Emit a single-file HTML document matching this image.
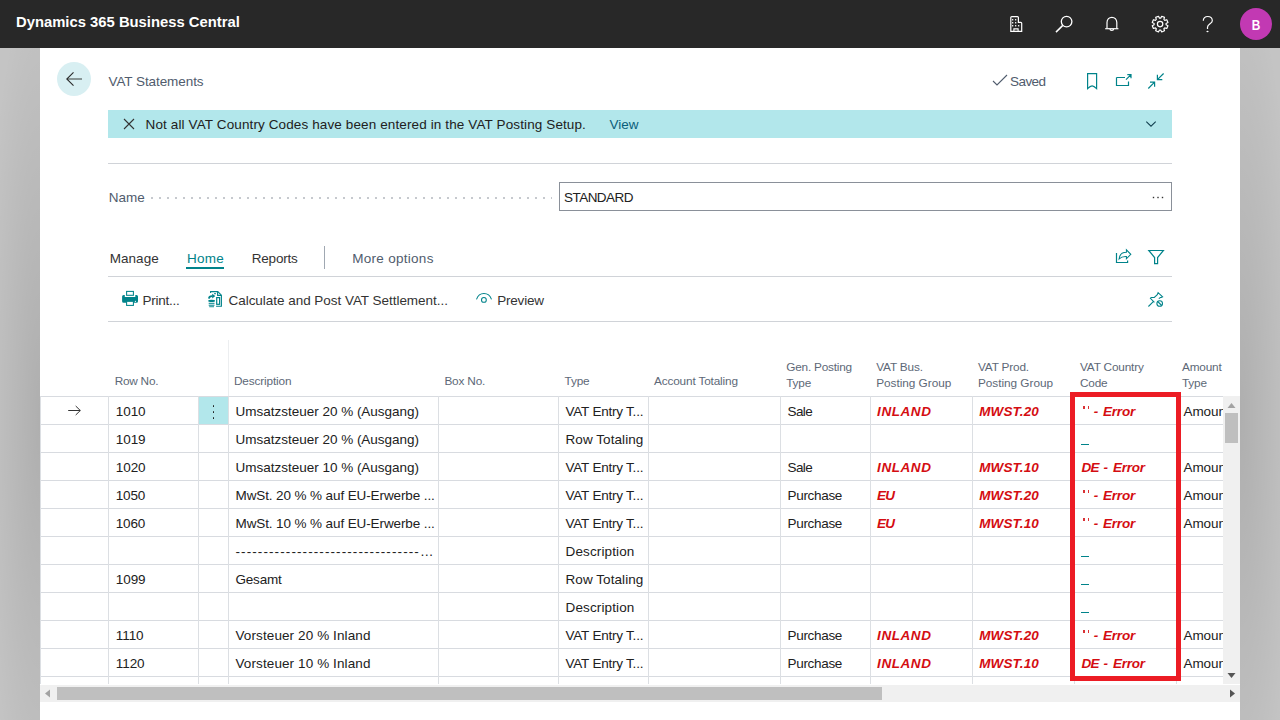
<!DOCTYPE html>
<html><head><meta charset="utf-8">
<style>
*{box-sizing:border-box;margin:0;padding:0}
html,body{width:1280px;height:720px;overflow:hidden;background:#fff;font-family:"Liberation Sans",sans-serif}
.a{position:absolute;white-space:pre}
.hl{position:absolute;height:1px;background:#d8dbe0}
.vl{position:absolute;width:1px;background:#dcdfe3}
svg{position:absolute;overflow:visible;left:0;top:0}
</style></head><body>

<div class="a" style="left:0;top:0;width:1280px;height:48px;background:#282828"></div>
<div class="a" style="left:16px;top:9.4px;font-size:15.4px;line-height:26px;font-weight:bold;color:#fff;transform-origin:0 0;transform:scaleX(0.962)">Dynamics 365 Business Central</div>
<div class="a" style="left:0;top:48px;width:40px;height:672px;background:radial-gradient(ellipse 56px 450px at 40px 370px,rgba(0,0,0,0.11),rgba(0,0,0,0) 100%),#c4c4c4"></div>
<div class="a" style="left:1240px;top:48px;width:40px;height:672px;background:radial-gradient(ellipse 56px 450px at 0px 370px,rgba(0,0,0,0.11),rgba(0,0,0,0) 100%),#c4c4c4"></div>
<svg width="1280" height="720" fill="none" stroke="#fff" stroke-width="1.2"><path d="M1010.8 17.6Q1010.8 16.7 1011.7 16.7H1017.5Q1018.4 16.7 1018.4 17.6V22.3H1020.8Q1021.7 22.3 1021.7 23.2V31.4H1010.8Z"/><path d="M1013.9 31.2V28.9H1018.1V31.2" stroke-width="1.1"/></svg>
<svg width="1280" height="720" fill="#fff"><rect x="1012" y="19.1" width="1.3" height="1.3"/><rect x="1015" y="19.1" width="1.3" height="1.3"/><rect x="1012" y="22.1" width="1.3" height="1.3"/><rect x="1015" y="22.1" width="1.3" height="1.3"/><rect x="1012" y="25.1" width="1.3" height="1.3"/><rect x="1015" y="25.1" width="1.3" height="1.3"/><rect x="1018" y="25.1" width="1.3" height="1.3"/><rect x="1015.6" y="29.6" width="0.8" height="1.3" fill="#888"/></svg>
<svg width="1280" height="720" fill="none" stroke="#fff" stroke-width="1.3"><circle cx="1066.6" cy="21.6" r="5.3"/><path d="M1062.8 25.4L1056 32.1" stroke-width="1.5"/></svg>
<svg width="1280" height="720" fill="none" stroke="#fff" stroke-width="1.2"><path d="M1107 28.5V22.6C1107 19.3 1109.2 17.3 1111.9 17.3C1114.6 17.3 1116.8 19.3 1116.8 22.6V28.5"/><path d="M1105.2 28.7H1118.4"/><path d="M1110 29C1110 30.8 1113.6 30.8 1113.6 29"/></svg>
<svg width="1280" height="720" fill="none" stroke="#fff" stroke-width="1.2" stroke-linejoin="round"><path d="M1166.07 24.72 L1167.94 25.71 L1166.78 28.50 L1164.76 27.89 L1163.89 28.76 L1164.50 30.78 L1161.71 31.94 L1160.72 30.07 L1159.48 30.07 L1158.49 31.94 L1155.70 30.78 L1156.31 28.76 L1155.44 27.89 L1153.42 28.50 L1152.26 25.71 L1154.13 24.72 L1154.13 23.48 L1152.26 22.49 L1153.42 19.70 L1155.44 20.31 L1156.31 19.44 L1155.70 17.42 L1158.49 16.26 L1159.48 18.13 L1160.72 18.13 L1161.71 16.26 L1164.50 17.42 L1163.89 19.44 L1164.76 20.31 L1166.78 19.70 L1167.94 22.49 L1166.07 23.48Z"/><circle cx="1160.1" cy="24.1" r="2.7"/></svg>
<svg width="1280" height="720" fill="none" stroke="#fff" stroke-width="1.2"><path d="M1203.3 20.8C1203.2 18 1205.2 16.5 1207.7 16.5C1210.4 16.5 1212.3 18.3 1212.3 20.8C1212.3 23.5 1207.5 24.2 1207.5 27.2V28.9"/></svg><svg width="1280" height="720"><ellipse cx="1207.5" cy="31.4" rx="1.1" ry="0.75" fill="#fff"/></svg>
<div class="a" style="left:1240px;top:8px;width:32px;height:32px;border-radius:50%;background:#c239b3"></div>
<div class="a" style="left:1240px;top:14.5px;width:32px;text-align:center;font-size:14.2px;line-height:20px;font-weight:bold;color:#fff;transform:scaleX(0.84)">B</div>
<div class="a" style="left:57px;top:62px;width:34px;height:34px;border-radius:50%;background:#d8eff2"></div>
<svg width="1280" height="720"><path d="M67 79H82" stroke="#66706f" stroke-width="1.4" fill="none"/><path d="M73.5 72.3L66.8 79L73.5 85.7" stroke="#2b2b2b" stroke-width="1.1" fill="none"/></svg>
<div class="a" style="left:108.50px;top:72.92px;font-size:13.5px;line-height:18px;font-weight:normal;font-style:normal;color:#505c6d;letter-spacing:-0.075px;">VAT Statements</div>
<div class="a" style="left:1010.00px;top:72.92px;font-size:13.5px;line-height:18px;font-weight:normal;font-style:normal;color:#505c6d;letter-spacing:-0.556px;">Saved</div>
<svg width="1280" height="720"><path d="M993 81L997 85L1007 75" stroke="#505c6d" stroke-width="1.1" fill="none"/></svg>
<svg width="1280" height="720" fill="none" stroke="#00838a" stroke-width="1.2"><path d="M1087.6 88.6V73.6H1096.6V88.6C1095 87 1093.6 85.9 1092.1 85.9C1090.6 85.9 1089.2 87 1087.6 88.6Z"/><path d="M1116.5 77.5H1125M1128.5 81.5V85.5H1116.5V77.5M1126 79.6L1131 74.6M1127.3 74.6H1131V78.3"/><path d="M1163.6 73.5L1157.4 79.7M1157.4 74.8V79.7H1162.3M1148.3 88.5L1154.6 82.2M1150 82.2H1154.6V86.8"/></svg>
<div class="a" style="left:108px;top:110px;width:1064px;height:28px;background:#b2e7eb"></div>
<svg width="1280" height="720"><path d="M124 119L134 129M134 119L124 129" stroke="#333" stroke-width="1.1" fill="none"/></svg>
<div class="a" style="left:145.60px;top:115.92px;font-size:13.5px;line-height:18px;font-weight:normal;font-style:normal;color:#212121;letter-spacing:0.118px;">Not all VAT Country Codes have been entered in the VAT Posting Setup.</div>
<div class="a" style="left:609.40px;top:115.92px;font-size:13.5px;line-height:18px;font-weight:normal;font-style:normal;color:#0b5e7a;letter-spacing:-0.008px;">View</div>
<svg width="1280" height="720"><path d="M1146.3 121.6L1151 126.2L1155.7 121.6" stroke="#123f4f" stroke-width="1.05" fill="none"/></svg>
<div class="hl" style="left:108px;top:163px;width:1064px;background:#d0d3d8"></div>
<div class="a" style="left:108.75px;top:188.52px;font-size:13.5px;line-height:18px;font-weight:normal;font-style:normal;color:#505c6d;letter-spacing:-0.004px;">Name</div>
<div class="a" style="left:148px;top:197px;width:404px;height:2px;background-image:radial-gradient(circle,#c6c9ce 0.9px,transparent 1.1px);background-size:8px 2px"></div>
<div class="a" style="left:559px;top:182px;width:613px;height:29px;border:1px solid #8a9099"></div>
<div class="a" style="left:564.00px;top:188.92px;font-size:13.5px;line-height:18px;font-weight:normal;font-style:normal;color:#212121;letter-spacing:-0.533px;">STANDARD</div>
<svg width="1280" height="720" fill="#333"><rect x="1152.8" y="196.8" width="1.4" height="1.4"/><rect x="1157.3" y="196.8" width="1.4" height="1.4"/><rect x="1161.8" y="196.8" width="1.4" height="1.4"/></svg>
<div class="a" style="left:109.75px;top:249.92px;font-size:13.5px;line-height:18px;font-weight:normal;font-style:normal;color:#333;letter-spacing:0.034px;">Manage</div>
<div class="a" style="left:186.90px;top:249.92px;font-size:13.5px;line-height:18px;font-weight:normal;font-style:normal;color:#00838a;letter-spacing:0.246px;">Home</div>
<div class="a" style="left:186px;top:267px;width:38px;height:2px;background:#00838a"></div>
<div class="a" style="left:251.70px;top:249.92px;font-size:13.5px;line-height:18px;font-weight:normal;font-style:normal;color:#333;letter-spacing:-0.183px;">Reports</div>
<div class="a" style="left:324px;top:246px;width:1px;height:23px;background:#a0a8b2"></div>
<div class="a" style="left:352.20px;top:249.92px;font-size:13.5px;line-height:18px;font-weight:normal;font-style:normal;color:#505c6d;letter-spacing:0.288px;">More options</div>
<svg width="1280" height="720" fill="none" stroke="#00838a" stroke-width="1.2"><path d="M1116.5 253V262.5H1127.6V260.4"/><path d="M1119.1 259C1119.5 254.6 1122 252.3 1126.4 252.3V249.8L1130.8 254.3L1126.4 258.8V256.5C1123 256.3 1120.8 257.2 1119.1 259Z" stroke-width="1.05" stroke-linejoin="miter"/><path d="M1148.8 250.5H1163.4L1157.6 257.5V263.6H1154.6V257.5Z"/></svg>
<div class="hl" style="left:108px;top:276px;width:1064px;background:#d0d3d8"></div>
<div class="a" style="left:142.60px;top:291.92px;font-size:13.5px;line-height:18px;font-weight:normal;font-style:normal;color:#333;letter-spacing:-0.252px;">Print...</div>
<div class="a" style="left:228.50px;top:291.92px;font-size:13.5px;line-height:18px;font-weight:normal;font-style:normal;color:#333;letter-spacing:-0.034px;">Calculate and Post VAT Settlement...</div>
<div class="a" style="left:497.25px;top:291.92px;font-size:13.5px;line-height:18px;font-weight:normal;font-style:normal;color:#333;letter-spacing:-0.217px;">Preview</div>
<svg width="1280" height="720"><path d="M123.6 295H124.8V297H135.3V295H136.5Q138 295 138 296.5V301.3Q138 302.8 136.5 302.8H123.6Q122.1 302.8 122.1 301.3V296.5Q122.1 295 123.6 295Z" fill="#00838a"/><rect x="126.6" y="291.4" width="6.8" height="3.9" fill="none" stroke="#00838a" stroke-width="1.05"/><rect x="126.6" y="301.3" width="6.8" height="4.1" fill="#fff" stroke="#00838a" stroke-width="1.05"/><circle cx="135.4" cy="301.3" r="0.65" fill="#fff"/></svg>
<svg width="1280" height="720" fill="none" stroke="#00838a" stroke-width="1.1"><path d="M210.6 292.9V291.6H217.8L221.4 295.2V306.2H216.1"/><path d="M217.6 292V295.4H221"/><path d="M214.2 293.6H215.8"/><rect x="216.7" y="297.6" width="2.9" height="6.7" stroke-width="1.2"/><path d="M208.9 298.6C209.1 296.6 210.5 295.9 212.6 296.1" stroke-width="1.7"/></svg>
<svg width="1280" height="720" fill="#00838a"><path d="M212.2 293.7L215.3 296.1L212.2 298.5Z"/><ellipse cx="211.6" cy="300.9" rx="3.4" ry="1.1"/><rect x="208.7" y="302.8" width="5.8" height="1"/><rect x="208.7" y="304.7" width="5.8" height="1"/><rect x="209.2" y="306.3" width="4.8" height="0.9"/></svg>
<svg width="1280" height="720" fill="none" stroke="#00838a" stroke-width="1.05"><path d="M476.5 299.3C477.8 295.6 480.5 293.5 483.9 293.5C487.3 293.5 490.2 295.6 491.5 299.3"/><circle cx="483.9" cy="299.9" r="2.4"/></svg>
<svg width="1280" height="720" fill="none" stroke="#00838a" stroke-width="1.2"><path d="M1148.4 306.5L1153.3 301.7M1154.4 302.4L1150.4 298.3L1151.2 297.5H1154.3L1157.3 294.7L1158.1 292.6L1162.6 296.9L1161.2 297.5H1160.4L1158.8 298.7" stroke-width="1.05"/><circle cx="1159.7" cy="303.5" r="2.8" stroke-width="1.1"/><path d="M1157.7 301.5L1161.7 305.5" stroke-width="1.1"/></svg>
<div class="hl" style="left:108px;top:321px;width:1064px;background:#d0d3d8"></div>
<div class="a" style="left:228px;top:340px;width:1px;height:56px;background:#eceef0"></div>
<div class="a" style="left:114.70px;top:374.31px;font-size:11.8px;line-height:15px;font-weight:normal;font-style:normal;color:#5d6877;letter-spacing:-0.236px;">Row No.</div>
<div class="a" style="left:234.00px;top:374.31px;font-size:11.8px;line-height:15px;font-weight:normal;font-style:normal;color:#5d6877;letter-spacing:-0.155px;">Description</div>
<div class="a" style="left:444.40px;top:374.31px;font-size:11.8px;line-height:15px;font-weight:normal;font-style:normal;color:#5d6877;letter-spacing:-0.173px;">Box No.</div>
<div class="a" style="left:564.60px;top:374.31px;font-size:11.8px;line-height:15px;font-weight:normal;font-style:normal;color:#5d6877;letter-spacing:-0.184px;">Type</div>
<div class="a" style="left:654.00px;top:374.31px;font-size:11.8px;line-height:15px;font-weight:normal;font-style:normal;color:#5d6877;letter-spacing:-0.156px;">Account Totaling</div>
<div class="a" style="left:786.25px;top:360.01px;font-size:11.8px;line-height:15px;font-weight:normal;font-style:normal;color:#5d6877;letter-spacing:-0.217px;">Gen. Posting</div>
<div class="a" style="left:786.25px;top:376.01px;font-size:11.8px;line-height:15px;font-weight:normal;font-style:normal;color:#5d6877;letter-spacing:-0.184px;">Type</div>
<div class="a" style="left:876.25px;top:360.01px;font-size:11.8px;line-height:15px;font-weight:normal;font-style:normal;color:#5d6877;letter-spacing:-0.172px;">VAT Bus.</div>
<div class="a" style="left:876.25px;top:376.01px;font-size:11.8px;line-height:15px;font-weight:normal;font-style:normal;color:#5d6877;letter-spacing:-0.032px;">Posting Group</div>
<div class="a" style="left:978.00px;top:360.01px;font-size:11.8px;line-height:15px;font-weight:normal;font-style:normal;color:#5d6877;letter-spacing:-0.168px;">VAT Prod.</div>
<div class="a" style="left:978.00px;top:376.01px;font-size:11.8px;line-height:15px;font-weight:normal;font-style:normal;color:#5d6877;letter-spacing:-0.032px;">Posting Group</div>
<div class="a" style="left:1080.00px;top:360.01px;font-size:11.8px;line-height:15px;font-weight:normal;font-style:normal;color:#5d6877;letter-spacing:-0.172px;">VAT Country</div>
<div class="a" style="left:1080.00px;top:376.01px;font-size:11.8px;line-height:15px;font-weight:normal;font-style:normal;color:#5d6877;letter-spacing:-0.203px;">Code</div>
<div class="a" style="left:1182.00px;top:360.01px;font-size:11.8px;line-height:15px;font-weight:normal;font-style:normal;color:#5d6877;letter-spacing:-0.195px;">Amount</div>
<div class="a" style="left:1182.00px;top:376.01px;font-size:11.8px;line-height:15px;font-weight:normal;font-style:normal;color:#5d6877;letter-spacing:-0.184px;">Type</div>
<div class="a" style="left:40px;top:396px;width:1183px;height:288px;overflow:hidden">
<div class="hl" style="left:0;top:0px;width:1183px"></div>
<div class="hl" style="left:0;top:28px;width:1183px"></div>
<div class="hl" style="left:0;top:56px;width:1183px"></div>
<div class="hl" style="left:0;top:84px;width:1183px"></div>
<div class="hl" style="left:0;top:112px;width:1183px"></div>
<div class="hl" style="left:0;top:140px;width:1183px"></div>
<div class="hl" style="left:0;top:168px;width:1183px"></div>
<div class="hl" style="left:0;top:196px;width:1183px"></div>
<div class="hl" style="left:0;top:224px;width:1183px"></div>
<div class="hl" style="left:0;top:252px;width:1183px"></div>
<div class="hl" style="left:0;top:280px;width:1183px"></div>
<div class="vl" style="left:0px;top:0;height:288px"></div>
<div class="vl" style="left:68px;top:0;height:288px"></div>
<div class="vl" style="left:158px;top:0;height:288px"></div>
<div class="vl" style="left:188px;top:0;height:288px"></div>
<div class="vl" style="left:398px;top:0;height:288px"></div>
<div class="vl" style="left:518px;top:0;height:288px"></div>
<div class="vl" style="left:608px;top:0;height:288px"></div>
<div class="vl" style="left:740px;top:0;height:288px"></div>
<div class="vl" style="left:830px;top:0;height:288px"></div>
<div class="vl" style="left:932px;top:0;height:288px"></div>
<div class="vl" style="left:1034px;top:0;height:288px"></div>
<div class="vl" style="left:1136px;top:0;height:288px"></div>
<div class="a" style="left:159px;top:1px;width:29px;height:27px;background:#b2e7eb"></div>
<div class="a" style="left:172.6px;top:9.2px;width:1.7px;height:1.7px;border-radius:50%;background:#1a1a1a;box-shadow:0 6px 0 #1a1a1a,0 12px 0 #1a1a1a"></div>
<svg width="1280" height="720"><path d="M28.2 14.5H40.3M35.7 10L40.3 14.5L35.7 19" stroke="#333" stroke-width="1" fill="none"/></svg>
<div class="a" style="left:75.80px;top:6.92px;font-size:13.5px;line-height:18px;font-weight:normal;font-style:normal;color:#212121;letter-spacing:-0.072px;">1010</div>
<div class="a" style="left:195.50px;top:6.92px;font-size:13.5px;line-height:18px;font-weight:normal;font-style:normal;color:#212121;letter-spacing:-0.009px;">Umsatzsteuer 20 % (Ausgang)</div>
<div class="a" style="left:525.50px;top:6.92px;font-size:13.5px;line-height:18px;font-weight:normal;font-style:normal;color:#212121;letter-spacing:-0.220px;">VAT Entry T...</div>
<div class="a" style="left:747.60px;top:6.92px;font-size:13.5px;line-height:18px;font-weight:normal;font-style:normal;color:#212121;letter-spacing:-0.633px;">Sale</div>
<div class="a" style="left:837.10px;top:6.92px;font-size:13.5px;line-height:18px;font-weight:bold;font-style:italic;color:#d40d12;letter-spacing:0.567px;">INLAND</div>
<div class="a" style="left:939.20px;top:6.92px;font-size:13.5px;line-height:18px;font-weight:bold;font-style:italic;color:#d40d12;letter-spacing:0.112px;">MWST.20</div>
<div class="a" style="left:1043.4px;top:10.4px;width:1.3px;height:3px;background:#d40d12;opacity:.85"></div>
<div class="a" style="left:1047.9px;top:10.4px;width:1.3px;height:3px;background:#d40d12;opacity:.85"></div>
<div class="a" style="left:1053.75px;top:6.92px;font-size:13.5px;line-height:18px;font-weight:bold;font-style:italic;color:#d40d12;letter-spacing:-0.300px;">-</div>
<div class="a" style="left:1063.00px;top:6.92px;font-size:13.5px;line-height:18px;font-weight:bold;font-style:italic;color:#d40d12;letter-spacing:-0.203px;">Error</div>
<div class="a" style="left:1143.50px;top:6.92px;font-size:13.5px;line-height:18px;font-weight:normal;font-style:normal;color:#212121;letter-spacing:-0.075px;">Amount</div>
<div class="a" style="left:75.80px;top:34.92px;font-size:13.5px;line-height:18px;font-weight:normal;font-style:normal;color:#212121;letter-spacing:-0.072px;">1019</div>
<div class="a" style="left:195.50px;top:34.92px;font-size:13.5px;line-height:18px;font-weight:normal;font-style:normal;color:#212121;letter-spacing:-0.009px;">Umsatzsteuer 20 % (Ausgang)</div>
<div class="a" style="left:525.50px;top:34.92px;font-size:13.5px;line-height:18px;font-weight:normal;font-style:normal;color:#212121;letter-spacing:0.071px;">Row Totaling</div>
<div class="a" style="left:1041px;top:48px;width:8px;height:1.2px;background:#00838a"></div>
<div class="a" style="left:75.80px;top:62.92px;font-size:13.5px;line-height:18px;font-weight:normal;font-style:normal;color:#212121;letter-spacing:-0.072px;">1020</div>
<div class="a" style="left:195.50px;top:62.92px;font-size:13.5px;line-height:18px;font-weight:normal;font-style:normal;color:#212121;letter-spacing:-0.009px;">Umsatzsteuer 10 % (Ausgang)</div>
<div class="a" style="left:525.50px;top:62.92px;font-size:13.5px;line-height:18px;font-weight:normal;font-style:normal;color:#212121;letter-spacing:-0.220px;">VAT Entry T...</div>
<div class="a" style="left:747.60px;top:62.92px;font-size:13.5px;line-height:18px;font-weight:normal;font-style:normal;color:#212121;letter-spacing:-0.633px;">Sale</div>
<div class="a" style="left:837.10px;top:62.92px;font-size:13.5px;line-height:18px;font-weight:bold;font-style:italic;color:#d40d12;letter-spacing:0.567px;">INLAND</div>
<div class="a" style="left:939.20px;top:62.92px;font-size:13.5px;line-height:18px;font-weight:bold;font-style:italic;color:#d40d12;letter-spacing:0.112px;">MWST.10</div>
<div class="a" style="left:1041.50px;top:62.92px;font-size:13.5px;line-height:18px;font-weight:bold;font-style:italic;color:#d40d12;letter-spacing:-0.633px;">DE</div>
<div class="a" style="left:1063.50px;top:62.92px;font-size:13.5px;line-height:18px;font-weight:bold;font-style:italic;color:#d40d12;letter-spacing:-0.300px;">-</div>
<div class="a" style="left:1073.00px;top:62.92px;font-size:13.5px;line-height:18px;font-weight:bold;font-style:italic;color:#d40d12;letter-spacing:-0.243px;">Error</div>
<div class="a" style="left:1143.50px;top:62.92px;font-size:13.5px;line-height:18px;font-weight:normal;font-style:normal;color:#212121;letter-spacing:-0.075px;">Amount</div>
<div class="a" style="left:75.80px;top:90.92px;font-size:13.5px;line-height:18px;font-weight:normal;font-style:normal;color:#212121;letter-spacing:-0.187px;">1050</div>
<div class="a" style="left:195.50px;top:90.92px;font-size:13.5px;line-height:18px;font-weight:normal;font-style:normal;color:#212121;letter-spacing:-0.109px;">MwSt. 20 % % auf EU-Erwerbe ...</div>
<div class="a" style="left:525.50px;top:90.92px;font-size:13.5px;line-height:18px;font-weight:normal;font-style:normal;color:#212121;letter-spacing:-0.220px;">VAT Entry T...</div>
<div class="a" style="left:747.60px;top:90.92px;font-size:13.5px;line-height:18px;font-weight:normal;font-style:normal;color:#212121;letter-spacing:-0.331px;">Purchase</div>
<div class="a" style="left:837.10px;top:90.92px;font-size:13.5px;line-height:18px;font-weight:bold;font-style:italic;color:#d40d12;letter-spacing:-0.883px;">EU</div>
<div class="a" style="left:939.20px;top:90.92px;font-size:13.5px;line-height:18px;font-weight:bold;font-style:italic;color:#d40d12;letter-spacing:0.112px;">MWST.20</div>
<div class="a" style="left:1043.4px;top:94.4px;width:1.3px;height:3px;background:#d40d12;opacity:.85"></div>
<div class="a" style="left:1047.9px;top:94.4px;width:1.3px;height:3px;background:#d40d12;opacity:.85"></div>
<div class="a" style="left:1053.75px;top:90.92px;font-size:13.5px;line-height:18px;font-weight:bold;font-style:italic;color:#d40d12;letter-spacing:-0.300px;">-</div>
<div class="a" style="left:1063.00px;top:90.92px;font-size:13.5px;line-height:18px;font-weight:bold;font-style:italic;color:#d40d12;letter-spacing:-0.203px;">Error</div>
<div class="a" style="left:1143.50px;top:90.92px;font-size:13.5px;line-height:18px;font-weight:normal;font-style:normal;color:#212121;letter-spacing:-0.075px;">Amount</div>
<div class="a" style="left:75.80px;top:118.92px;font-size:13.5px;line-height:18px;font-weight:normal;font-style:normal;color:#212121;letter-spacing:-0.187px;">1060</div>
<div class="a" style="left:195.50px;top:118.92px;font-size:13.5px;line-height:18px;font-weight:normal;font-style:normal;color:#212121;letter-spacing:-0.109px;">MwSt. 10 % % auf EU-Erwerbe ...</div>
<div class="a" style="left:525.50px;top:118.92px;font-size:13.5px;line-height:18px;font-weight:normal;font-style:normal;color:#212121;letter-spacing:-0.220px;">VAT Entry T...</div>
<div class="a" style="left:747.60px;top:118.92px;font-size:13.5px;line-height:18px;font-weight:normal;font-style:normal;color:#212121;letter-spacing:-0.331px;">Purchase</div>
<div class="a" style="left:837.10px;top:118.92px;font-size:13.5px;line-height:18px;font-weight:bold;font-style:italic;color:#d40d12;letter-spacing:-0.883px;">EU</div>
<div class="a" style="left:939.20px;top:118.92px;font-size:13.5px;line-height:18px;font-weight:bold;font-style:italic;color:#d40d12;letter-spacing:0.112px;">MWST.10</div>
<div class="a" style="left:1043.4px;top:122.4px;width:1.3px;height:3px;background:#d40d12;opacity:.85"></div>
<div class="a" style="left:1047.9px;top:122.4px;width:1.3px;height:3px;background:#d40d12;opacity:.85"></div>
<div class="a" style="left:1053.75px;top:118.92px;font-size:13.5px;line-height:18px;font-weight:bold;font-style:italic;color:#d40d12;letter-spacing:-0.300px;">-</div>
<div class="a" style="left:1063.00px;top:118.92px;font-size:13.5px;line-height:18px;font-weight:bold;font-style:italic;color:#d40d12;letter-spacing:-0.203px;">Error</div>
<div class="a" style="left:1143.50px;top:118.92px;font-size:13.5px;line-height:18px;font-weight:normal;font-style:normal;color:#212121;letter-spacing:-0.075px;">Amount</div>
<div class="a" style="left:195.50px;top:146.92px;font-size:13.5px;line-height:18px;font-weight:normal;font-style:normal;color:#212121;letter-spacing:1.092px;">---------------------------------&#8230;</div>
<div class="a" style="left:525.50px;top:146.92px;font-size:13.5px;line-height:18px;font-weight:normal;font-style:normal;color:#212121;letter-spacing:0.134px;">Description</div>
<div class="a" style="left:1041px;top:160px;width:8px;height:1.2px;background:#00838a"></div>
<div class="a" style="left:75.80px;top:174.92px;font-size:13.5px;line-height:18px;font-weight:normal;font-style:normal;color:#212121;letter-spacing:-0.072px;">1099</div>
<div class="a" style="left:195.50px;top:174.92px;font-size:13.5px;line-height:18px;font-weight:normal;font-style:normal;color:#212121;letter-spacing:-0.211px;">Gesamt</div>
<div class="a" style="left:525.50px;top:174.92px;font-size:13.5px;line-height:18px;font-weight:normal;font-style:normal;color:#212121;letter-spacing:0.071px;">Row Totaling</div>
<div class="a" style="left:1041px;top:188px;width:8px;height:1.2px;background:#00838a"></div>
<div class="a" style="left:525.50px;top:202.92px;font-size:13.5px;line-height:18px;font-weight:normal;font-style:normal;color:#212121;letter-spacing:0.134px;">Description</div>
<div class="a" style="left:1041px;top:216px;width:8px;height:1.2px;background:#00838a"></div>
<div class="a" style="left:75.80px;top:230.92px;font-size:13.5px;line-height:18px;font-weight:normal;font-style:normal;color:#212121;letter-spacing:-0.067px;">1110</div>
<div class="a" style="left:195.50px;top:230.92px;font-size:13.5px;line-height:18px;font-weight:normal;font-style:normal;color:#212121;letter-spacing:0.103px;">Vorsteuer 20 % Inland</div>
<div class="a" style="left:525.50px;top:230.92px;font-size:13.5px;line-height:18px;font-weight:normal;font-style:normal;color:#212121;letter-spacing:-0.220px;">VAT Entry T...</div>
<div class="a" style="left:747.60px;top:230.92px;font-size:13.5px;line-height:18px;font-weight:normal;font-style:normal;color:#212121;letter-spacing:-0.331px;">Purchase</div>
<div class="a" style="left:837.10px;top:230.92px;font-size:13.5px;line-height:18px;font-weight:bold;font-style:italic;color:#d40d12;letter-spacing:0.567px;">INLAND</div>
<div class="a" style="left:939.20px;top:230.92px;font-size:13.5px;line-height:18px;font-weight:bold;font-style:italic;color:#d40d12;letter-spacing:0.112px;">MWST.20</div>
<div class="a" style="left:1043.4px;top:234.4px;width:1.3px;height:3px;background:#d40d12;opacity:.85"></div>
<div class="a" style="left:1047.9px;top:234.4px;width:1.3px;height:3px;background:#d40d12;opacity:.85"></div>
<div class="a" style="left:1053.75px;top:230.92px;font-size:13.5px;line-height:18px;font-weight:bold;font-style:italic;color:#d40d12;letter-spacing:-0.300px;">-</div>
<div class="a" style="left:1063.00px;top:230.92px;font-size:13.5px;line-height:18px;font-weight:bold;font-style:italic;color:#d40d12;letter-spacing:-0.203px;">Error</div>
<div class="a" style="left:1143.50px;top:230.92px;font-size:13.5px;line-height:18px;font-weight:normal;font-style:normal;color:#212121;letter-spacing:-0.075px;">Amount</div>
<div class="a" style="left:75.80px;top:258.92px;font-size:13.5px;line-height:18px;font-weight:normal;font-style:normal;color:#212121;letter-spacing:-0.070px;">1120</div>
<div class="a" style="left:195.50px;top:258.92px;font-size:13.5px;line-height:18px;font-weight:normal;font-style:normal;color:#212121;letter-spacing:0.103px;">Vorsteuer 10 % Inland</div>
<div class="a" style="left:525.50px;top:258.92px;font-size:13.5px;line-height:18px;font-weight:normal;font-style:normal;color:#212121;letter-spacing:-0.220px;">VAT Entry T...</div>
<div class="a" style="left:747.60px;top:258.92px;font-size:13.5px;line-height:18px;font-weight:normal;font-style:normal;color:#212121;letter-spacing:-0.331px;">Purchase</div>
<div class="a" style="left:837.10px;top:258.92px;font-size:13.5px;line-height:18px;font-weight:bold;font-style:italic;color:#d40d12;letter-spacing:0.567px;">INLAND</div>
<div class="a" style="left:939.20px;top:258.92px;font-size:13.5px;line-height:18px;font-weight:bold;font-style:italic;color:#d40d12;letter-spacing:0.112px;">MWST.10</div>
<div class="a" style="left:1041.50px;top:258.92px;font-size:13.5px;line-height:18px;font-weight:bold;font-style:italic;color:#d40d12;letter-spacing:-0.633px;">DE</div>
<div class="a" style="left:1063.50px;top:258.92px;font-size:13.5px;line-height:18px;font-weight:bold;font-style:italic;color:#d40d12;letter-spacing:-0.300px;">-</div>
<div class="a" style="left:1073.00px;top:258.92px;font-size:13.5px;line-height:18px;font-weight:bold;font-style:italic;color:#d40d12;letter-spacing:-0.243px;">Error</div>
<div class="a" style="left:1143.50px;top:258.92px;font-size:13.5px;line-height:18px;font-weight:normal;font-style:normal;color:#212121;letter-spacing:-0.075px;">Amount</div>
</div>
<div class="a" style="left:1070px;top:392px;width:111px;height:289px;border:5px solid #ec1c24"></div>
<div class="a" style="left:1223px;top:396px;width:17px;height:288px;background:#f0f0f0"></div>
<div class="a" style="left:1225px;top:413px;width:13px;height:30px;background:#bfbfbf"></div>
<svg width="1280" height="720"><path d="M1227.5 408H1235.5L1231.5 403Z" fill="#a3a3a3"/><path d="M1227.5 673H1235.5L1231.5 678Z" fill="#555"/></svg>
<div class="a" style="left:40px;top:685px;width:1200px;height:17px;background:#f0f0f0"></div>
<div class="a" style="left:57px;top:687px;width:825px;height:13px;background:#bfbfbf"></div>
<svg width="1280" height="720"><path d="M50 689.5V697.5L45 693.5Z" fill="#a3a3a3"/><path d="M1230 689.5V697.5L1235 693.5Z" fill="#555"/></svg>
</body></html>
